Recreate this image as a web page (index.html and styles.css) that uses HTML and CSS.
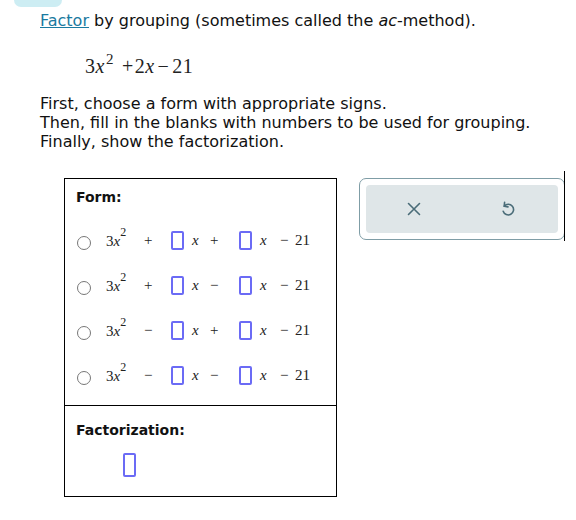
FILE: index.html
```html
<!DOCTYPE html>
<html>
<head>
<meta charset="utf-8">
<link rel="stylesheet" href="styles.css">
</head>
<body>
<div class="badge"></div>
<div class="page">
  <p class="intro"><a href="#" class="link">Factor</a> by grouping (sometimes called the <i>ac</i>-method).</p>
  <div class="poly"><span>3</span><i>x</i><sup>2</sup><span class="sp">+</span><span>2</span><i>x</i><span class="mn">−</span><span>21</span></div>
  <p class="steps">First, choose a form with appropriate signs.<br>Then, fill in the blanks with numbers to be used for grouping.<br>Finally, show the factorization.</p>
  <div class="work">
    <div class="formbox">
      <div class="formsec">
        <div class="label">Form:</div>
        <div class="row"><span class="radio"></span><span class="t">3<i>x</i><sup>2</sup></span><span class="op">+</span><span class="blank"></span><i class="v">x</i><span class="op2">+</span><span class="blank"></span><i class="v">x</i><span class="op3">−</span><span class="n">21</span></div>
        <div class="row"><span class="radio"></span><span class="t">3<i>x</i><sup>2</sup></span><span class="op">+</span><span class="blank"></span><i class="v">x</i><span class="op2">−</span><span class="blank"></span><i class="v">x</i><span class="op3">−</span><span class="n">21</span></div>
        <div class="row"><span class="radio"></span><span class="t">3<i>x</i><sup>2</sup></span><span class="op">−</span><span class="blank"></span><i class="v">x</i><span class="op2">+</span><span class="blank"></span><i class="v">x</i><span class="op3">−</span><span class="n">21</span></div>
        <div class="row"><span class="radio"></span><span class="t">3<i>x</i><sup>2</sup></span><span class="op">−</span><span class="blank"></span><i class="v">x</i><span class="op2">−</span><span class="blank"></span><i class="v">x</i><span class="op3">−</span><span class="n">21</span></div>
      </div>
      <div class="factsec">
        <div class="label">Factorization:</div>
        <span class="blank big"></span>
      </div>
    </div>
    <div class="tools">
      <div class="toolbar">
        <svg class="ico" width="16" height="16" viewBox="0 0 16 16"><path d="M2.5 2.5 L13.5 13.5 M13.5 2.5 L2.5 13.5" stroke="#4a6c78" stroke-width="1.6" fill="none" stroke-linecap="round"/></svg>
        <svg class="ico" width="18" height="18" viewBox="0 0 18 18"><path d="M5.2 6.2 A5.3 5.3 0 1 1 4.2 11.2" stroke="#4a6c78" stroke-width="1.6" fill="none" stroke-linecap="round"/><path d="M5.6 2.4 L5.2 6.3 L9 6.9" stroke="#4a6c78" stroke-width="1.6" fill="none" stroke-linecap="round" stroke-linejoin="round"/></svg>
      </div>
    </div>
    <div class="edge"></div>
  </div>
</div>
</body>
</html>
```
FILE: styles.css
```css
html, body { margin: 0; padding: 0; background: #fff; }
body { font-family: "DejaVu Sans", Verdana, sans-serif; color: #111; font-size: 16px; }
.badge { width: 48px; height: 7px; margin-left: 14px; background: #cdedf3; border-radius: 0 0 8px 8px; }
.page { padding-left: 40px; }
.intro { margin: 4px 0 0; line-height: 19px; font-size: 16px; }
.link { color: #1a7aa0; text-decoration: underline; }
.poly { margin: 24px 0 0 45px; font-family: "Liberation Serif", serif; font-size: 20px; line-height: 24px; height: 24px; color: #222; letter-spacing: 0.5px; }
.poly sup { font-size: 15px; vertical-align: 9px; line-height: 0; margin-left: 1px; }
.poly .sp { margin-left: 8px; margin-right: 1px; }
.poly .mn { margin: 0 3px 0 3px; }
.steps { margin: 16px 0 0; line-height: 19px; font-size: 16px; }
.work { display: flex; align-items: flex-start; margin-top: 27px; margin-left: 24px; }
.formbox { width: 271px; border: 1px solid #000; }
.formsec { height: 226px; border-bottom: 1px solid #000; padding: 0 0 0 11px; }
.label { font-weight: bold; font-size: 14px; line-height: 18px; padding-top: 9px; }
.formsec .label { margin-bottom: 12px; }
.row { display: flex; align-items: center; height: 45px; font-family: "Liberation Serif", serif; font-size: 15px; color: #222; }
.radio { width: 12px; height: 12px; border: 1px solid #777; border-radius: 50%; margin-left: 1px; margin-top: 4px; flex: none; }
.t { margin-left: 15px; width: 38px; flex: none; }
.t sup { font-size: 12px; vertical-align: 10px; line-height: 0; }
.op { width: 27px; flex: none; }
.op2 { width: 29px; margin-left: 10px; flex: none; }
.op3 { margin-left: 12px; width: 15px; flex: none; }
.blank { width: 9px; height: 15px; border: 2px solid #6b6bf5; border-radius: 2px; flex: none; display: inline-block; }
.v { margin-left: 8px; width: 8px; flex: none; }
.factsec { height: 90px; padding-left: 11px; }
.factsec .label { padding-top: 15px; }
.blank.big { height: 20px; margin: 14px 0 0 47px; }
.tools { margin-left: 22px; margin-top: 0; width: 206px; height: 62px; border: 1px solid #7f9da6; border-radius: 7px; padding: 6px; box-sizing: border-box; }
.toolbar { height: 48px; background: #dfe6e8; border-radius: 4px; display: flex; align-items: center; justify-content: space-between; padding: 0 41px 0 40px; }
.ico { display: block; }
.edge { width: 1px; height: 70px; background: #000; margin-left: -1px; margin-top: -7px; }
```
